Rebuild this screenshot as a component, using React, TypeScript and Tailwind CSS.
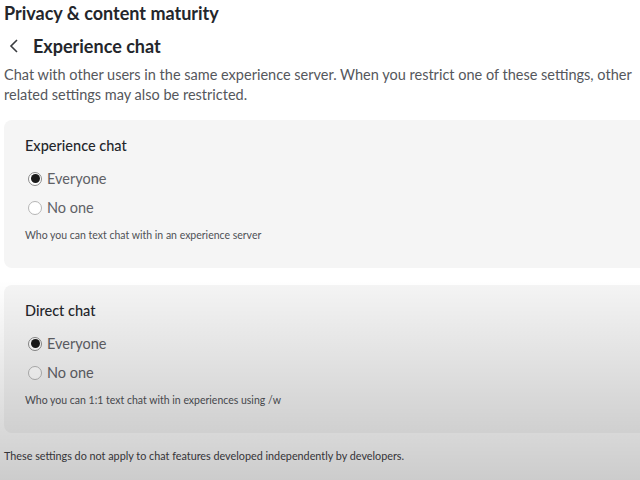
import { useState } from "react";

function Radio({ checked, label, onSelect }: { checked: boolean; label: string; onSelect: () => void }) {
  return (
    <button onClick={onSelect} className="flex h-[29px] items-center gap-[5px] pl-[3px]">
      <span
        className={
          checked
            ? "flex h-[14px] w-[14px] items-center justify-center rounded-full border border-[#8a8a8a] bg-white"
            : "flex h-[14px] w-[14px] items-center justify-center rounded-full border border-[#b5b5b5] bg-white"
        }
      >
        {checked && <span className="h-[9px] w-[9px] rounded-full bg-[#1a1a1a]" />}
      </span>
      <span className="text-[14.5px] text-[#5f6166]">{label}</span>
    </button>
  );
}

function SettingCard({ title, hint }: { title: string; hint: string }) {
  const [value, setValue] = useState("everyone");
  return (
    <div className="rounded-l-[8px] bg-[#f5f5f5] pb-[26px] pl-[21px] pt-[16px]">
      <h3 className="text-[14.5px] font-medium leading-[20px] text-[#24262b]">{title}</h3>
      <div className="mt-[8px] flex flex-col">
        <Radio checked={value === "everyone"} label="Everyone" onSelect={() => setValue("everyone")} />
        <Radio checked={value === "none"} label="No one" onSelect={() => setValue("none")} />
      </div>
      <p className="mt-[6px] text-[10.5px] leading-[14px] text-[#4f5156]">{hint}</p>
    </div>
  );
}

export default function App() {
  return (
    <div className="relative h-[480px] w-[640px] overflow-hidden bg-white font-['Lato',sans-serif]">
      <div className="pl-[4px] pt-[1px]">
        <h1 className="text-[18px] font-bold leading-[24px] text-[#24262b]">Privacy &amp; content maturity</h1>
        <div className="mt-[9px] flex items-center">
          <svg width="12" height="16" viewBox="0 0 12 16" className="ml-[4px]">
            <path d="M9 2 L3 8 L9 14" fill="none" stroke="#3a3c40" strokeWidth="1.6" />
          </svg>
          <h2 className="ml-[13px] text-[18px] font-bold leading-[24px] text-[#24262b]">Experience chat</h2>
        </div>
        <p className="mt-[7px] w-[636px] text-[14.5px] leading-[20px] text-[#55575c]">
          Chat with other users in the same experience server. When you restrict one of these settings, other
          related settings may also be restricted.
        </p>
      </div>

      <div className="ml-[4px] mt-[15px] flex flex-col gap-[17px]">
        <SettingCard title="Experience chat" hint="Who you can text chat with in an experience server" />
        <SettingCard title="Direct chat" hint="Who you can 1:1 text chat with in experiences using /w" />
      </div>

      <p className="ml-[4px] mt-[16px] text-[10.8px] leading-[14px] text-[#3f4145]">
        These settings do not apply to chat features developed independently by developers.
      </p>

      {/* video player shading over the lower part */}
      <div className="pointer-events-none absolute inset-x-0 bottom-0 h-[200px] bg-gradient-to-b from-transparent to-black/20" />
    </div>
  );
}
